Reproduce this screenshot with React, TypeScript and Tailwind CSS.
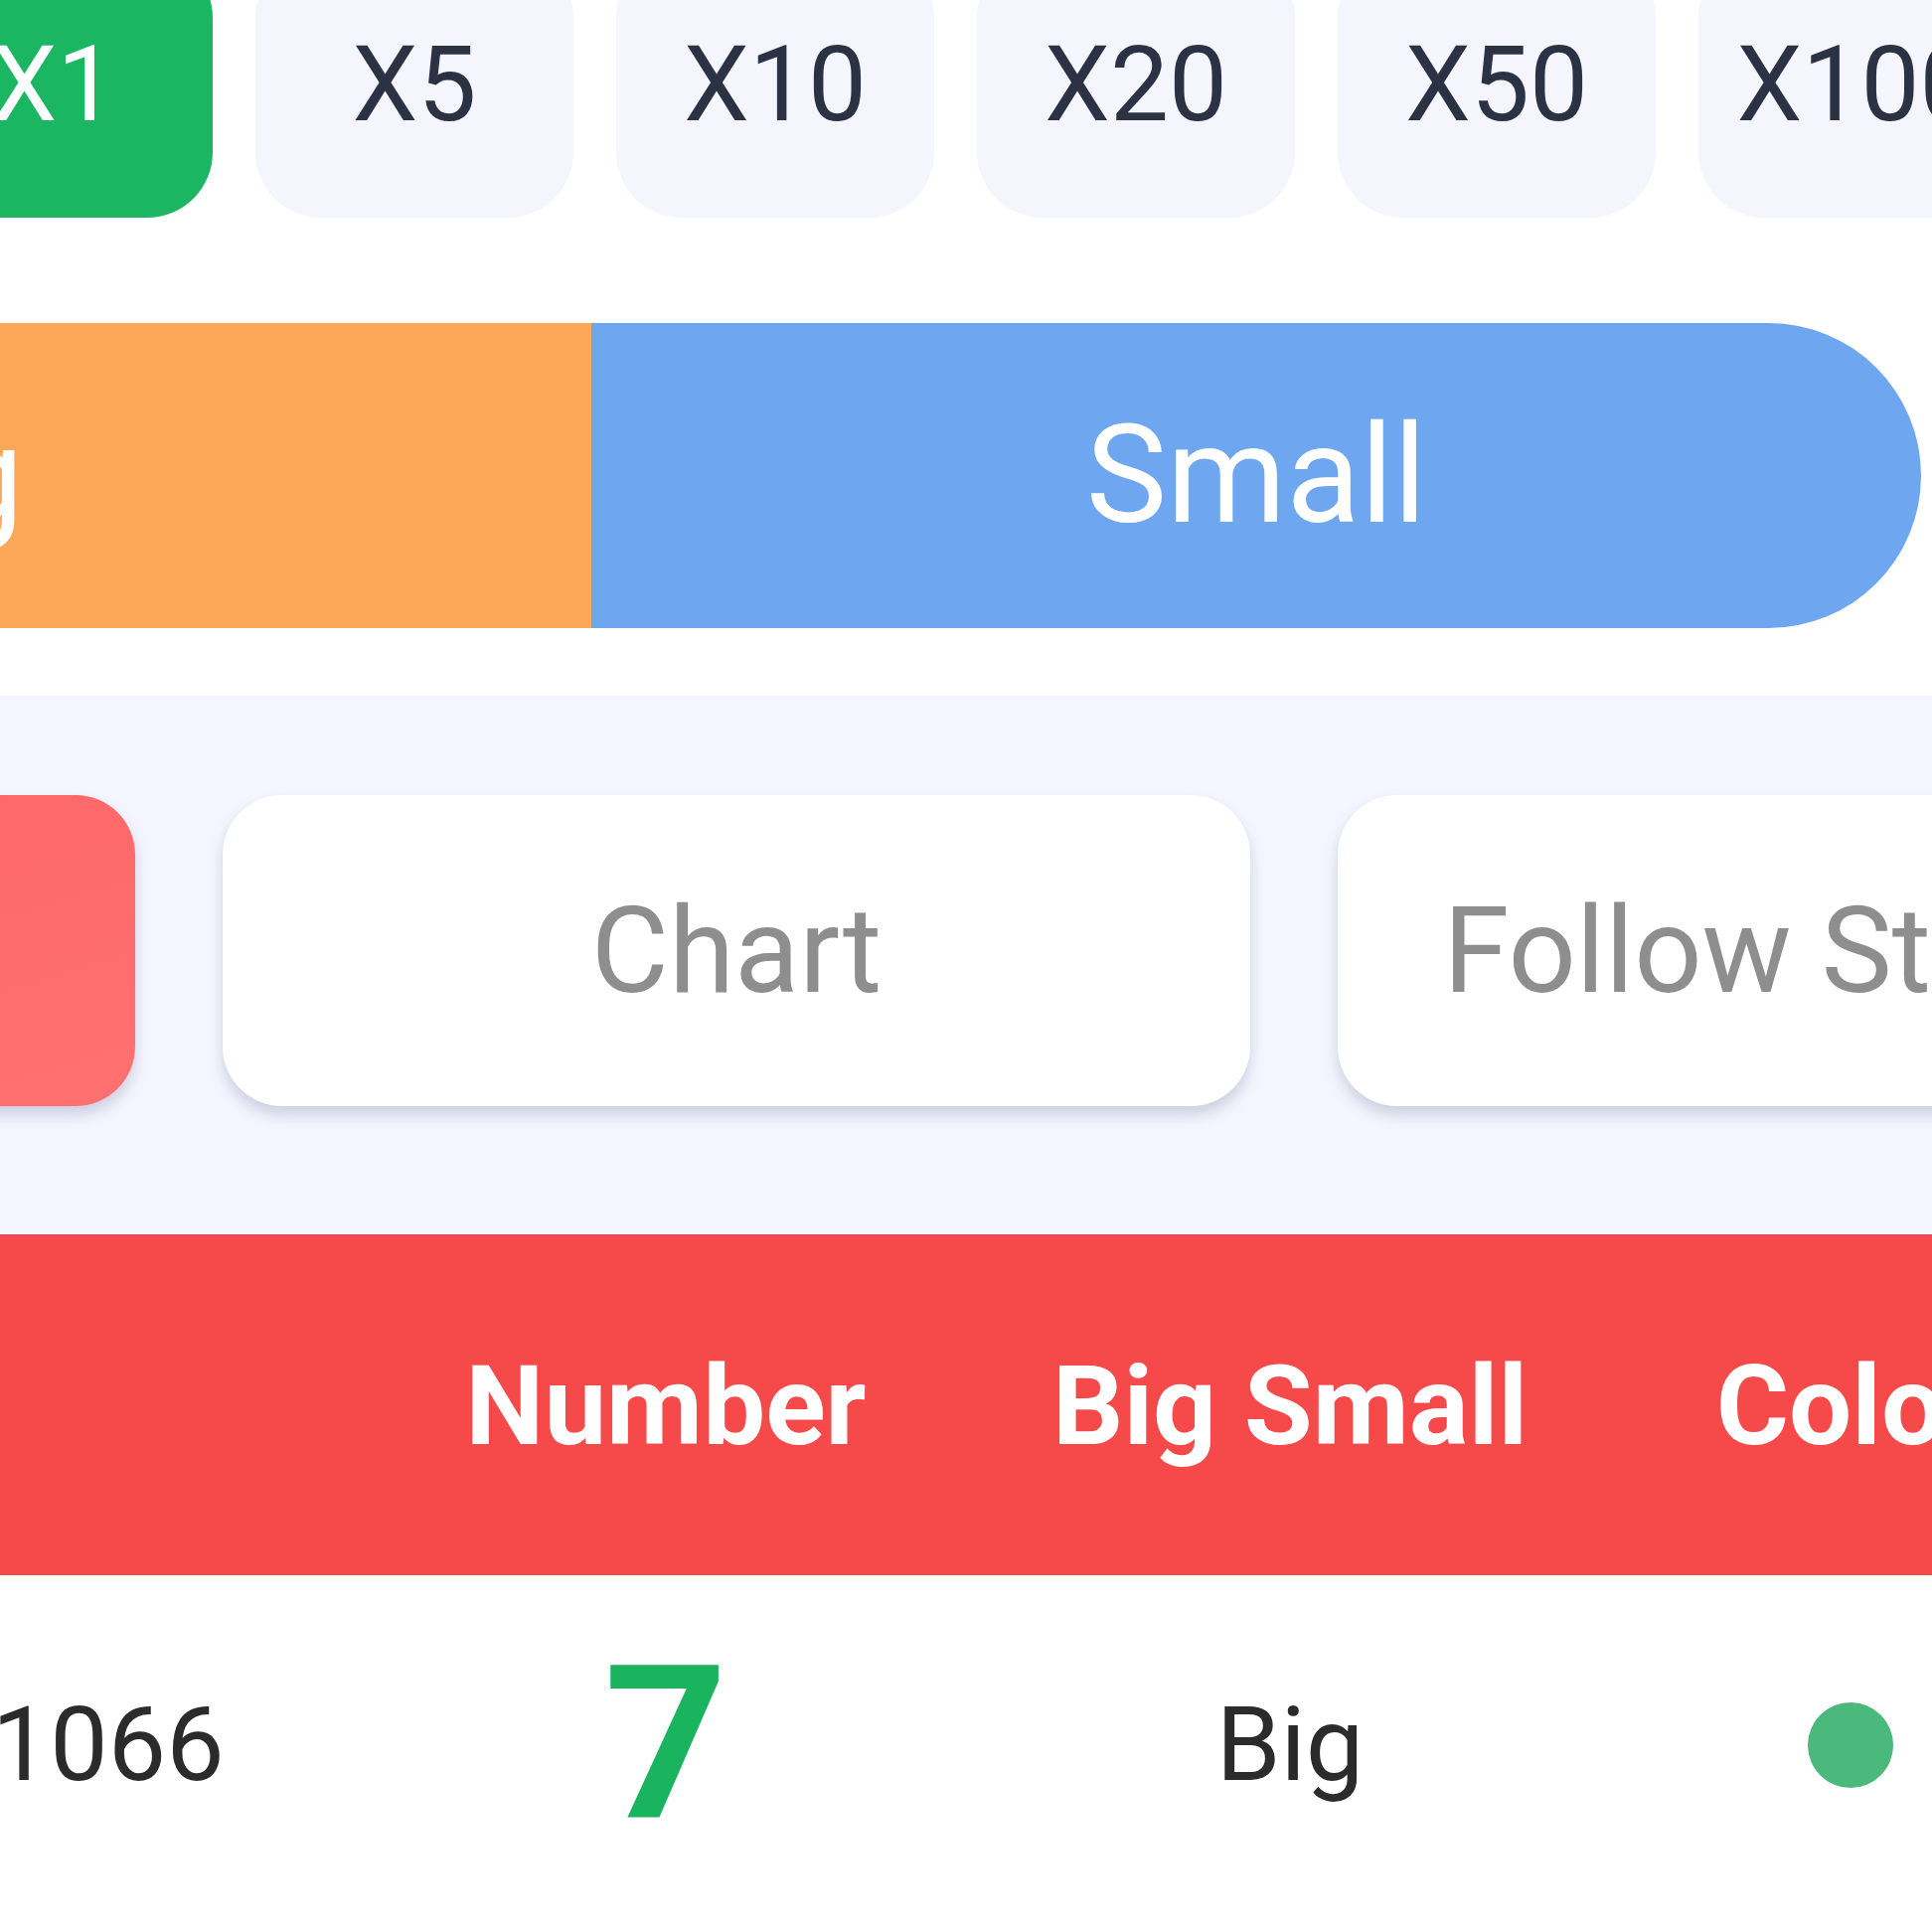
import React from "react";

const multipliers = ["X1", "X5", "X10", "X20", "X50", "X100"];

const tabs = [
  { label: "Game history", active: true },
  { label: "Chart", active: false },
  { label: "Follow Strategy", active: false },
];

const history = [{ period: "20250824011066", number: 7, size: "Big", colors: ["#4bb97b"] }];

const App: React.FC = () => {
  return (
    <div className="w-[1944px] h-[1944px] overflow-hidden bg-white font-['Roboto','Liberation_Sans',sans-serif]">
      {/* Multiplier row */}
      <div className="flex gap-[43px] ml-[-106px] mt-[-48px]">
        {multipliers.map((m, i) => (
          <div
            key={m}
            className={`w-[320px] h-[267px] shrink-0 rounded-[66px] flex items-center justify-center text-[105px] leading-none ${
              i === 0 ? "bg-[#1bb661] text-white" : "bg-[#f4f5fd] text-[#2b3244]"
            }`}
          >
            {m}
          </div>
        ))}
      </div>

      {/* Big / Small */}
      <div className="mt-[106px] ml-[-743px] w-[2676px] h-[307px] flex rounded-full overflow-hidden">
        <div className="flex-1 bg-[#fda858] flex items-center justify-center text-white text-[137px] leading-none">
          Big
        </div>
        <div className="flex-1 bg-[#6ea7f0] flex items-center justify-center text-white text-[137px] leading-none">
          Small
        </div>
      </div>

      {/* Tabs */}
      <div className="mt-[68px] bg-[#f4f5fe] pt-[100px] h-[542px]">
        <div className="flex gap-[88px] ml-[-898px]">
          {tabs.map((t) => (
            <div
              key={t.label}
              className={`w-[1034px] h-[313px] shrink-0 rounded-[60px] flex items-center justify-center text-[120px] leading-none whitespace-nowrap shadow-[0_9px_14px_rgba(150,155,185,0.4)] ${
                t.active
                  ? "bg-linear-to-br from-[#fc6263] to-[#ff7171] text-white"
                  : "bg-white text-[#8e8e8e]"
              }`}
            >
              {t.label}
            </div>
          ))}
        </div>
      </div>

      {/* Table header */}
      <div className="ml-[-700px] flex h-[343px] items-center bg-[#f5494a] border-t-2 border-[#e44a4b] text-white font-bold text-[112px] leading-none">
        <div className="w-[1055px] shrink-0 text-center">Period</div>
        <div className="w-[630px] shrink-0 text-center">Number</div>
        <div className="w-[626px] shrink-0 text-center whitespace-nowrap">Big Small</div>
        <div className="w-[502px] shrink-0 text-center">Color</div>
      </div>

      {/* Rows */}
      {history.map((r) => (
        <div key={r.period} className="ml-[-700px] flex h-[342px] items-center text-[#2b2b2b] text-[104px] leading-none">
          <div className="w-[1055px] shrink-0 text-center pr-[22px]">{r.period}</div>
          <div className="w-[630px] shrink-0 text-center text-[216px] font-bold text-[#1ab45f]">{r.number}</div>
          <div className="w-[626px] shrink-0 text-center">{r.size}</div>
          <div className="w-[502px] shrink-0 flex justify-center gap-[20px]">
            {r.colors.map((c) => (
              <span key={c} className="w-[86px] h-[86px] rounded-full" style={{ backgroundColor: c }} />
            ))}
          </div>
        </div>
      ))}
    </div>
  );
};

export default App;
